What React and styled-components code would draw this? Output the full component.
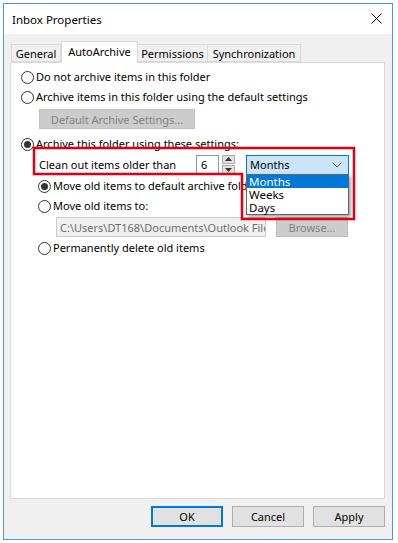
import React from "react";
import styled, { createGlobalStyle } from "styled-components";

const GlobalStyle = createGlobalStyle`
  html, body {
    margin: 0;
    padding: 0;
    background: #ffffff;
  }
  body {
    font-family: "Segoe UI", "Noto Sans", "Open Sans", sans-serif;
    font-size: 11px;
    color: #000;
  }
`;

const tabs = [
  { label: "General", width: 50 },
  { label: "AutoArchive", width: 77, active: true },
  { label: "Permissions", width: 70 },
  { label: "Synchronization", width: 93 },
];

const units = ["Months", "Weeks", "Days"];

function Radio({ checked }) {
  return <RadioCircle>{checked && <RadioDot />}</RadioCircle>;
}

export default function App() {
  return (
    <>
      <GlobalStyle />
      <Window>
        <TitleBar>
          <Title>Inbox Properties</Title>
          <CloseIcon width="11" height="11" viewBox="0 0 11 11">
            <path d="M0.5 0.5 L10.5 10.5 M10.5 0.5 L0.5 10.5" stroke="#000" strokeWidth="1" />
          </CloseIcon>
        </TitleBar>

        <TabStrip>
          {tabs.map((t) => (
            <Tab key={t.label} $active={t.active} $width={t.width}>
              {t.label}
            </Tab>
          ))}
        </TabStrip>

        <Panel>
          <OptionRow>
            <Radio />
            <Label>Do not archive items in this folder</Label>
          </OptionRow>
          <OptionRow>
            <Radio />
            <Label>Archive items in this folder using the default settings</Label>
          </OptionRow>
          <ButtonRow $indent={18}>
            <DisabledButton $width={156}>Default Archive Settings...</DisabledButton>
          </ButtonRow>
          <OptionRow $top={5}>
            <Radio checked />
            <Label>Archive this folder using these settings:</Label>
          </OptionRow>

          <CleanRow>
            <CleanLabel>Clean out items older than</CleanLabel>
            <SpinInput>6</SpinInput>
            <Spinner>
              <SpinHalf>
                <svg width="7" height="4" viewBox="0 0 7 4">
                  <path d="M3.5 0 L7 4 L0 4 Z" fill="#333" />
                </svg>
              </SpinHalf>
              <SpinHalf>
                <svg width="7" height="4" viewBox="0 0 7 4">
                  <path d="M0 0 L7 0 L3.5 4 Z" fill="#333" />
                </svg>
              </SpinHalf>
            </Spinner>
            <Combo>
              <ComboValue>Months</ComboValue>
              <svg width="10" height="6" viewBox="0 0 10 6">
                <path d="M0.5 0.5 L5 5 L9.5 0.5" fill="none" stroke="#555" strokeWidth="1" />
              </svg>
              <DropList>
                {units.map((u, i) => (
                  <DropItem key={u} $selected={i === 0}>
                    {u}
                  </DropItem>
                ))}
              </DropList>
            </Combo>
          </CleanRow>

          <OptionRow $indent={17} $top={1}>
            <Radio checked />
            <Label>Move old items to default archive folder</Label>
          </OptionRow>
          <OptionRow $indent={17}>
            <Radio />
            <Label>Move old items to:</Label>
          </OptionRow>
          <PathRow>
            <PathBox>C:\Users\DT168\Documents\Outlook Files\archive.pst</PathBox>
            <DisabledButton $width={72}>Browse...</DisabledButton>
          </PathRow>
          <OptionRow $indent={17} $top={1}>
            <Radio />
            <Label>Permanently delete old items</Label>
          </OptionRow>

          <Highlight width="324" height="76" viewBox="0 0 324 76">
            <path
              d="M2 2 L322 2 L322 73 L210 73 L210 28 L2 28 Z"
              fill="none"
              stroke="#e00016"
              strokeWidth="2.5"
            />
          </Highlight>
        </Panel>

        <Footer>
          <DialogButton $default>OK</DialogButton>
          <DialogButton>Cancel</DialogButton>
          <DialogButton>Apply</DialogButton>
        </Footer>
      </Window>
    </>
  );
}

const Window = styled.div`
  margin: 3px;
  width: 390px;
  height: 537px;
  box-sizing: border-box;
  border: 1px solid #4a97dc;
  background: #f0f0f0;
  display: flex;
  flex-direction: column;
`;

const TitleBar = styled.div`
  height: 30px;
  background: #ffffff;
  display: flex;
  align-items: center;
  justify-content: space-between;
  padding: 0 10px 0 8px;
  flex-shrink: 0;
`;

const Title = styled.span`
  font-size: 11.5px;
  color: #000;
`;

const CloseIcon = styled.svg`
  display: block;
  margin-top: -1px;
`;

const TabStrip = styled.div`
  height: 28px;
  display: flex;
  align-items: flex-end;
  padding-left: 7px;
  flex-shrink: 0;
  position: relative;
  z-index: 1;
`;

const Tab = styled.div`
  box-sizing: border-box;
  width: ${(p) => p.$width}px;
  height: ${(p) => (p.$active ? 22 : 18)}px;
  margin-bottom: ${(p) => (p.$active ? -1 : 0)}px;
  background: ${(p) => (p.$active ? "#ffffff" : "#f0f0f0")};
  border: 1px solid #d9d9d9;
  border-bottom: ${(p) => (p.$active ? "none" : "1px solid #d9d9d9")};
  border-left: ${(p) => (p.$active ? "1px solid #d9d9d9" : "none")};
  display: flex;
  align-items: ${(p) => (p.$active ? "flex-start" : "center")};
  justify-content: center;
  padding-top: ${(p) => (p.$active ? "2px" : "0")};
  font-size: 11px;
  white-space: nowrap;
  &:first-child {
    border-left: 1px solid #d9d9d9;
  }
`;

const Panel = styled.div`
  position: relative;
  flex: 1;
  margin: 0 7px 0 6px;
  background: #ffffff;
  border: 1px solid #d9d9d9;
  padding: 4px 0 0 10px;
  display: flex;
  flex-direction: column;
`;

const OptionRow = styled.div`
  display: flex;
  align-items: center;
  gap: 2px;
  height: 20px;
  margin-left: ${(p) => p.$indent || 0}px;
  margin-top: ${(p) => p.$top || 0}px;
  white-space: nowrap;
`;

const RadioCircle = styled.span`
  box-sizing: border-box;
  width: 13px;
  height: 13px;
  border-radius: 50%;
  border: 1px solid #333333;
  background: #fff;
  display: flex;
  align-items: center;
  justify-content: center;
  flex-shrink: 0;
`;

const RadioDot = styled.span`
  width: 7px;
  height: 7px;
  border-radius: 50%;
  background: #333333;
`;

const Label = styled.span`
  font-size: 11px;
  line-height: 16px;
`;

const ButtonRow = styled.div`
  display: flex;
  margin-left: ${(p) => p.$indent}px;
  margin-top: 2px;
`;

const DisabledButton = styled.div`
  box-sizing: border-box;
  width: ${(p) => p.$width}px;
  height: 20px;
  background: #cccccc;
  border: 1px solid #bfbfbf;
  color: #838383;
  display: flex;
  align-items: center;
  justify-content: center;
  font-size: 11px;
  flex-shrink: 0;
`;

const CleanRow = styled.div`
  display: flex;
  align-items: center;
  height: 21px;
  margin-left: 18px;
`;

const CleanLabel = styled.span`
  width: 157px;
  font-size: 11px;
  white-space: nowrap;
`;

const SpinInput = styled.div`
  box-sizing: border-box;
  width: 23px;
  height: 20px;
  border: 1px solid #7a9cc6;
  background: #fff;
  padding-left: 4px;
  display: flex;
  align-items: center;
  font-size: 11px;
`;

const Spinner = styled.div`
  display: flex;
  flex-direction: column;
  gap: 1px;
  margin-left: 3px;
  height: 20px;
`;

const SpinHalf = styled.div`
  box-sizing: border-box;
  width: 13px;
  flex: 1;
  background: #e1e1e1;
  border: 1px solid #adadad;
  display: flex;
  align-items: center;
  justify-content: center;
  svg {
    display: block;
  }
`;

const Combo = styled.div`
  position: relative;
  box-sizing: border-box;
  width: 103px;
  height: 20px;
  margin-left: 11px;
  background: #cce4f7;
  border: 1px solid #0078d7;
  display: flex;
  align-items: center;
  justify-content: space-between;
  padding: 0 6px 0 3px;
  svg {
    display: block;
  }
`;

const ComboValue = styled.span`
  font-size: 11px;
`;

const DropList = styled.div`
  position: absolute;
  top: 100%;
  left: -1px;
  width: 103px;
  box-sizing: border-box;
  background: #fff;
  border: 1px solid #646464;
  box-shadow: 2px 2px 3px rgba(0, 0, 0, 0.35);
  display: flex;
  flex-direction: column;
  z-index: 2;
`;

const DropItem = styled.div`
  height: 13px;
  line-height: 13px;
  padding-left: 2px;
  font-size: 11.5px;
  background: ${(p) => (p.$selected ? "#0078d7" : "#fff")};
  color: ${(p) => (p.$selected ? "#fff" : "#000")};
`;

const PathRow = styled.div`
  display: flex;
  align-items: center;
  gap: 10px;
  margin-left: 35px;
  margin-top: 1px;
`;

const PathBox = styled.div`
  box-sizing: border-box;
  width: 210px;
  height: 20px;
  border: 1px solid #cccccc;
  background: #f0f0f0;
  color: #6d6d6d;
  padding-left: 3px;
  display: flex;
  align-items: center;
  overflow: hidden;
  white-space: nowrap;
  font-size: 11px;
`;

const Highlight = styled.svg`
  position: absolute;
  left: 21px;
  top: 83px;
  pointer-events: none;
  z-index: 3;
`;

const Footer = styled.div`
  height: 40px;
  flex-shrink: 0;
  display: flex;
  justify-content: flex-end;
  align-items: flex-start;
  gap: 9px;
  padding: 7px 7px 0 0;
  box-sizing: border-box;
`;

const DialogButton = styled.div`
  box-sizing: border-box;
  width: 72px;
  height: 21px;
  background: #e1e1e1;
  border: ${(p) => (p.$default ? "2px solid #0078d7" : "1px solid #adadad")};
  display: flex;
  align-items: center;
  justify-content: center;
  font-size: 11px;
`;
